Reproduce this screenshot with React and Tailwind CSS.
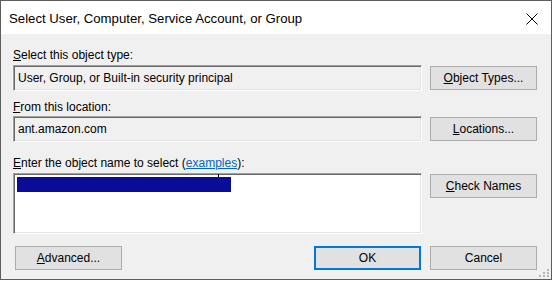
import React from 'react';

const font = { fontFamily: '"Liberation Sans", Arial, sans-serif' };

function Btn({ children, primary, className = '' }) {
  return (
    <button
      className={`h-[24px] w-[107px] bg-[#e1e1e1] text-[12px] text-black leading-none flex items-center justify-center ${
        primary ? 'border-2 border-[#0078d7]' : 'border border-[#adadad]'
      } ${className}`}
    >
      {children}
    </button>
  );
}

function Field({ children, className = '', white }) {
  return (
    <div
      className={`w-[409px] border border-t-[#a0a0a0] border-l-[#a0a0a0] border-r-white border-b-white shadow-[inset_1px_1px_0_#696969,inset_-1px_-1px_0_#e3e3e3] ${
        white ? 'bg-white' : 'bg-[#f0f0f0]'
      } ${className}`}
    >
      {children}
    </div>
  );
}

export default function App() {
  return (
    <div className="w-[552px] h-[281px] bg-white" style={font}>
      <div className="relative w-[552px] h-[280px] border border-[#5c5c5c] bg-[#f0f0f0] flex flex-col">
        {/* title bar */}
        <div className="h-[33px] bg-white flex items-center justify-between pl-[8px] pr-[13px]">
          <span className="text-[13.2px] text-black pt-[2px]">Select User, Computer, Service Account, or Group</span>
          <svg width="12" height="12" viewBox="0 0 12 12" className="mt-[2px]">
            <path d="M0.5 0.5 L11.5 11.5 M11.5 0.5 L0.5 11.5" stroke="#000" strokeWidth="1" fill="none" />
          </svg>
        </div>

        {/* body */}
        <div className="flex-1 pl-[12px] pr-[14px] pt-[13px] text-[12px] text-black">
          <div className="leading-[16px] h-[16px]">
            <span className="underline">S</span>elect this object type:
          </div>
          <div className="mt-[2px] flex items-center justify-between">
            <Field className="h-[26px] pl-[4px] flex items-center">User, Group, or Built-in security principal</Field>
            <Btn>
              <span>
                <span className="underline">O</span>bject Types...
              </span>
            </Btn>
          </div>

          <div className="mt-[8px] leading-[16px] h-[16px]">
            <span className="underline">F</span>rom this location:
          </div>
          <div className="mt-[1px] flex items-center justify-between">
            <Field className="h-[26px] pl-[4px] flex items-center">ant.amazon.com</Field>
            <Btn>
              <span>
                <span className="underline">L</span>ocations...
              </span>
            </Btn>
          </div>

          <div className="mt-[13px] leading-[16px] h-[16px]">
            <span className="underline">E</span>nter the object name to select (
            <span className="text-[#0066cc] underline">examples</span>):
          </div>
          <div className="mt-[2px] flex items-start justify-between">
            <Field white className="relative h-[61px] pl-[3px] pt-[3px]">
              <div className="w-[214px] h-[15px] bg-[#080c96]" />
              <div className="absolute left-[204px] top-[0px] w-px h-[4px] bg-black" />
            </Field>
            <Btn className="mt-[1px]">
              <span>
                <span className="underline">C</span>heck Names
              </span>
            </Btn>
          </div>

          <div className="mt-[12px] flex items-center">
            <Btn className="ml-[2px]">
              <span>
                <span className="underline">A</span>dvanced...
              </span>
            </Btn>
            <div className="flex-1" />
            <Btn primary className="w-[89px]">OK</Btn>
            <Btn className="w-[89px] ml-[9px]">Cancel</Btn>
          </div>
        </div>

        {/* size grip */}
        <svg width="11" height="9" viewBox="0 0 11 9" className="absolute right-[1px] bottom-[1px]">
          <rect x="8" y="0" width="2" height="2" fill="#b5b5b5" />
          <rect x="4" y="3" width="2" height="2" fill="#b5b5b5" />
          <rect x="8" y="3" width="2" height="2" fill="#b5b5b5" />
          <rect x="0" y="6" width="2" height="2" fill="#b5b5b5" />
          <rect x="4" y="6" width="2" height="2" fill="#b5b5b5" />
          <rect x="8" y="6" width="2" height="2" fill="#b5b5b5" />
        </svg>
      </div>
    </div>
  );
}
